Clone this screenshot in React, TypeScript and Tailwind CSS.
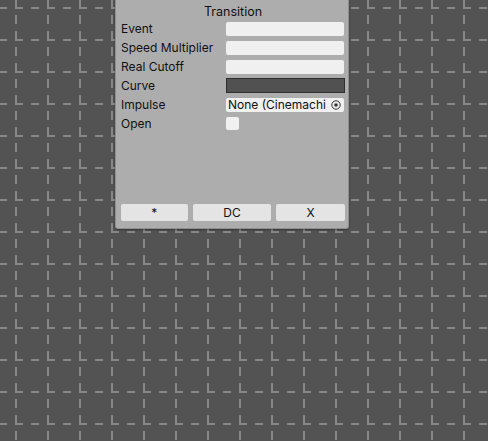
import React from 'react';

const rows = ['Event', 'Speed Multiplier', 'Real Cutoff'];

const GridBackground: React.FC = () => (
  <svg className="absolute inset-0 h-full w-full" aria-hidden="true">
    <defs>
      <pattern id="graph-grid" width="32" height="32" patternUnits="userSpaceOnUse">
        <rect width="32" height="32" fill="#535353" />
        <g fill="#878787">
          {/* vertical dashes */}
          <rect x="15" y="0" width="2" height="9" />
          <rect x="15" y="15" width="2" height="9" />
          <rect x="15" y="31" width="2" height="1" />
          {/* horizontal dashes */}
          <rect x="0" y="7" width="7" height="2" />
          <rect x="15" y="7" width="8" height="2" />
          <rect x="31" y="7" width="1" height="2" />
        </g>
      </pattern>
    </defs>
    <rect width="100%" height="100%" fill="url(#graph-grid)" />
  </svg>
);

const Field: React.FC = () => (
  <div className="h-[14px] w-[118px] rounded-[2px] bg-[#f0f0f0]" />
);

const Row: React.FC<{ label: string; children: React.ReactNode }> = ({ label, children }) => (
  <div className="flex h-[19px] items-center">
    <span className="w-[105px] leading-none">{label}</span>
    {children}
  </div>
);

export default function App() {
  return (
    <div
      className="relative h-[441px] w-[488px] overflow-hidden text-[12px] text-[#111]"
      style={{ fontFamily: 'Inter, "Noto Sans", sans-serif' }}
    >
      <GridBackground />

      <div className="relative ml-[115px] flex h-[229px] w-[234px] flex-col rounded-b-[3px] border border-t-0 border-[#8e8e8e] bg-[#adadad] pl-[5px] pr-[3px] shadow-[0_1px_2px_rgba(0,0,0,0.35)]">
        <div className="flex h-[22px] items-center justify-center pt-[3px] text-[12.5px]">Transition</div>

        <div className="-mt-[3px] flex flex-col">
          {rows.map(r => (
            <Row key={r} label={r}>
              <Field />
            </Row>
          ))}
          <Row label="Curve">
            <div className="h-[15px] w-[119px] border border-[#2e2e2e] bg-[#515151]" />
          </Row>
          <Row label="Impulse">
            <div className="flex h-[14px] w-[118px] items-center justify-between rounded-[2px] bg-[#f0f0f0] pl-[2px] pr-[3px] text-[12px] leading-none">
              <span className="whitespace-nowrap">None (Cinemachi</span>
              <svg width="10" height="10" viewBox="0 0 10 10" className="ml-[3px] shrink-0">
                <circle cx="5" cy="5" r="4.2" fill="none" stroke="#333" strokeWidth="1" />
                <circle cx="5" cy="5" r="1.8" fill="#333" />
              </svg>
            </div>
          </Row>
          <Row label="Open">
            <div className="h-[13px] w-[13px] rounded-[2px] bg-[#f0f0f0]" />
          </Row>
        </div>

        <div className="mt-auto mb-[7px] flex gap-[5px]">
          <button className="h-[17px] w-[67px] rounded-[2px] bg-[#e4e4e4] leading-none">*</button>
          <button className="h-[17px] w-[79px] rounded-[2px] bg-[#e4e4e4] leading-none">DC</button>
          <button className="h-[17px] w-[69px] rounded-[2px] bg-[#e4e4e4] leading-none">X</button>
        </div>
      </div>
    </div>
  );
}
